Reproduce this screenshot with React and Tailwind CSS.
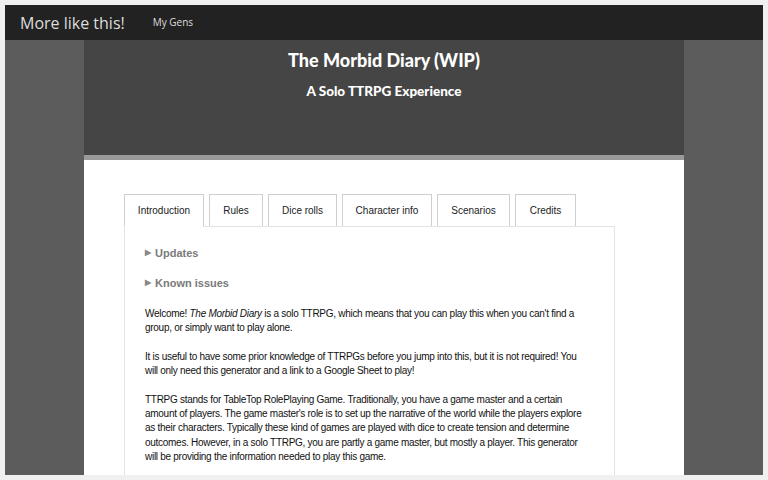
import React, { useState } from 'react';

const tabs = [
  { name: 'Introduction', w: 'w-[80px]' },
  { name: 'Rules', w: 'w-[54px]' },
  { name: 'Dice rolls', w: 'w-[69px]' },
  { name: 'Character info', w: 'w-[90px]' },
  { name: 'Scenarios', w: 'w-[73px]' },
  { name: 'Credits', w: 'w-[61px]' },
];

const App = () => {
  const [active, setActive] = useState('Introduction');

  return (
    <div className="w-[768px] h-[480px] bg-[#f0f0f0] p-[5px] overflow-hidden">
      <div className="h-full flex flex-col">
        {/* top nav */}
        <div className="h-[35px] shrink-0 bg-[#222] flex items-center font-['Open_Sans',sans-serif]">
          <span className="pl-[15px] text-[16px] text-[#ddd]">More like this!</span>
          <span className="ml-[28px] text-[10px] text-[#ddd]">My Gens</span>
        </div>

        <div className="flex-1 bg-[#5c5c5c] overflow-hidden">
          <div className="w-[600px] mx-auto h-full flex flex-col">
            {/* header */}
            <div className="h-[115px] shrink-0 bg-[#454545] text-center text-white font-['Lato',sans-serif] font-black">
              <h1 className="pt-[8px] text-[18px] leading-[24px]">The Morbid Diary (WIP)</h1>
              <h2 className="mt-[10px] text-[13.5px] leading-[18px]">A Solo TTRPG Experience</h2>
            </div>
            <div className="h-[5px] shrink-0 bg-[#9a9a9a]" />

            {/* main */}
            <div className="flex-1 bg-white pt-[34px] pl-[40px] font-['Liberation_Sans',Arial,sans-serif]">
              <div className="w-[491px]">
                <div className="flex gap-[5px] border-b border-[#e3e3e3]">
                  {tabs.map((t) => (
                    <button
                      key={t.name}
                      onClick={() => setActive(t.name)}
                      className={`${t.w} h-[32px] border border-[#cfcfcf] text-[10px] text-[#222] ${
                        active === t.name ? 'bg-white border-b-white -mb-px h-[33px]' : 'border-b-0 bg-white'
                      }`}
                    >
                      {t.name}
                    </button>
                  ))}
                </div>

                <div className="border border-t-0 border-[#e3e3e3] pl-[20px] pr-[4px] pt-[19px] text-[10px] leading-[14.3px] tracking-[-0.28px] text-[#111]">
                  <div className="flex items-center gap-[4px] text-[11px] font-bold tracking-normal text-[#7a7a7a]">
                    <span className="text-[8px] text-[#888]">▶</span>
                    <span>Updates</span>
                  </div>
                  <div className="mt-[16px] flex items-center gap-[4px] text-[11px] font-bold tracking-normal text-[#7a7a7a]">
                    <span className="text-[8px] text-[#888]">▶</span>
                    <span>Known issues</span>
                  </div>

                  <p className="mt-[16px] whitespace-nowrap">
                    Welcome! <i>The Morbid Diary</i> is a solo TTRPG, which means that you can play this when you can't find a
                    <br />
                    group, or simply want to play alone.
                  </p>
                  <p className="mt-[14.5px] whitespace-nowrap">
                    It is useful to have some prior knowledge of TTRPGs before you jump into this, but it is not required! You
                    <br />
                    will only need this generator and a link to a Google Sheet to play!
                  </p>
                  <p className="mt-[14.5px] pb-[20px] whitespace-nowrap">
                    TTRPG stands for TableTop RolePlaying Game. Traditionally, you have a game master and a certain
                    <br />
                    amount of players. The game master's role is to set up the narrative of the world while the players explore
                    <br />
                    as their characters. Typically these kind of games are played with dice to create tension and determine
                    <br />
                    outcomes. However, in a solo TTRPG, you are partly a game master, but mostly a player. This generator
                    <br />
                    will be providing the information needed to play this game.
                  </p>
                </div>
              </div>
            </div>
          </div>
        </div>
      </div>
    </div>
  );
};

export default App;
